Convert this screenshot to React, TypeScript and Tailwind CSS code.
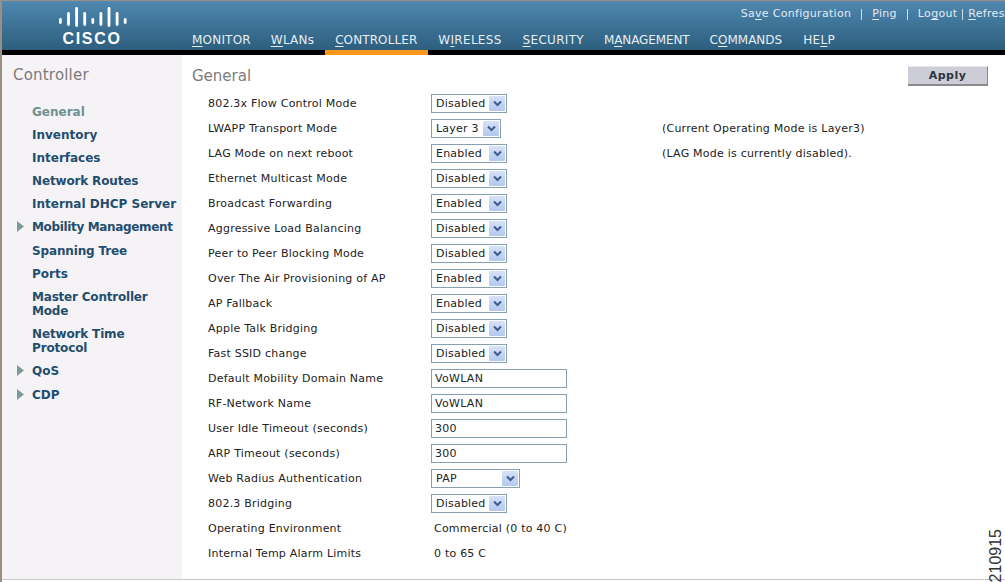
import React from "react";

const font = { fontFamily: '"DejaVu Sans", Verdana, sans-serif' };

function U({ t, i }: { t: string; i: number }) {
  return (
    <span>
      {t.slice(0, i)}
      <u className="underline underline-offset-2">{t[i]}</u>
      {t.slice(i + 1)}
    </span>
  );
}

function Sel({ v, w }: { v: string; w: string }) {
  return (
    <div className={`${w} h-[19px] border border-[#86a0b2] bg-white flex items-center justify-between pl-[4px] pr-[1px] text-[11px] text-[#222]`}>
      <span className="pt-[1px]">{v}</span>
      <span className="w-[16px] h-[15px] bg-gradient-to-b from-[#d6e2f8] to-[#b3c8ee] flex items-center justify-center rounded-[1px]">
        <svg width="9" height="7" viewBox="0 0 9 7">
          <path d="M1 1.5 L4.5 5 L8 1.5" fill="none" stroke="#3f5a8e" strokeWidth="2" />
        </svg>
      </span>
    </div>
  );
}

function Inp({ v }: { v: string }) {
  return (
    <input
      readOnly
      value={v}
      className="w-[136px] h-[19px] border border-[#86a0b2] bg-white px-[3px] text-[11px] text-[#222] tracking-[0.3px] outline-none"
      style={font}
    />
  );
}

const rows: [string, React.ReactNode, string?][] = [
  ["802.3x Flow Control Mode", <Sel v="Disabled" w="w-[76px]" />],
  ["LWAPP Transport Mode", <Sel v="Layer 3" w="w-[70px]" />, "(Current Operating Mode is Layer3)"],
  ["LAG Mode on next reboot", <Sel v="Enabled" w="w-[76px]" />, "(LAG Mode is currently disabled)."],
  ["Ethernet Multicast Mode", <Sel v="Disabled" w="w-[76px]" />],
  ["Broadcast Forwarding", <Sel v="Enabled" w="w-[76px]" />],
  ["Aggressive Load Balancing", <Sel v="Disabled" w="w-[76px]" />],
  ["Peer to Peer Blocking Mode", <Sel v="Disabled" w="w-[76px]" />],
  ["Over The Air Provisioning of AP", <Sel v="Enabled" w="w-[76px]" />],
  ["AP Fallback", <Sel v="Enabled" w="w-[76px]" />],
  ["Apple Talk Bridging", <Sel v="Disabled" w="w-[76px]" />],
  ["Fast SSID change", <Sel v="Disabled" w="w-[76px]" />],
  ["Default Mobility Domain Name", <Inp v="VoWLAN" />],
  ["RF-Network Name", <Inp v="VoWLAN" />],
  ["User Idle Timeout (seconds)", <Inp v="300" />],
  ["ARP Timeout (seconds)", <Inp v="300" />],
  ["Web Radius Authentication", <Sel v="PAP" w="w-[89px]" />],
  ["802.3 Bridging", <Sel v="Disabled" w="w-[76px]" />],
  ["Operating Environment", <span className="pl-[3px] pt-[1px]">Commercial (0 to 40 C)</span>],
  ["Internal Temp Alarm Limits", <span className="pl-[3px] pt-[1px]">0 to 65 C</span>],
];

function Arrow() {
  return (
    <svg width="7" height="11" viewBox="0 0 7 11" className="absolute left-[15px] top-[1px]">
      <path d="M0 0 L7 5.5 L0 11 Z" fill="#7b9c9c" />
    </svg>
  );
}

function Side({ t, arrow, active, cls }: { t: React.ReactNode; arrow?: boolean; active?: boolean; cls: string }) {
  return (
    <div className={`relative pl-[30px] font-bold text-[12px] leading-[14px] whitespace-nowrap ${active ? "text-[#6f9090]" : "text-[#1f4e6f]"} ${cls}`}>
      {arrow && <Arrow />}
      {t}
    </div>
  );
}

const nav: [string, number, string][] = [
  ["MONITOR", 0, "ml-[190px] tracking-[0.2px]"],
  ["WLANs", 0, "ml-[20px] tracking-[0.2px]"],
  ["CONTROLLER", 0, "ml-[21px] tracking-[0.1px]"],
  ["WIRELESS", 1, "ml-[21px] tracking-[0.3px]"],
  ["SECURITY", 0, "ml-[21px] tracking-[0.3px]"],
  ["MANAGEMENT", 1, "ml-[20px] tracking-[-0.1px]"],
  ["COMMANDS", 1, "ml-[20px] tracking-[0px]"],
  ["HELP", 2, "ml-[21px] tracking-[0.3px]"],
];

const bars: [number, number][] = [
  [11, 6],
  [5, 14],
  [0, 20],
  [5, 14],
  [11, 6],
  [5, 14],
  [0, 20],
  [5, 14],
  [11, 6],
];

export default function App() {
  return (
    <div className="relative w-[1005px] h-[582px] overflow-hidden bg-white border-t border-l-2 border-[#9a8f85]" style={font}>
      <header className="relative h-[49px] bg-gradient-to-b from-[#4f88b0] to-[#2d5e7e] overflow-hidden">
        <div className="absolute left-[52px] top-[6px] w-[76px] flex flex-col items-center">
          <svg width="70" height="21" viewBox="0 0 70 21" className="ml-[2px]">
            {bars.map(([y, h], i) => (
              <rect key={i} x={1 + i * 8.1} y={y} width="2.8" height={h} rx="1.4" fill="#ffffff" />
            ))}
          </svg>
          <span className="text-[16px] leading-[16px] font-bold text-white tracking-[1.7px] mt-[3px]" style={{ fontFamily: '"Liberation Sans", sans-serif' }}>
            CISCO
          </span>
        </div>
        <div className="absolute right-[-7px] top-[6px] flex items-center text-[11px] leading-[14px] text-[#e2ebf1] whitespace-nowrap tracking-[0.3px]">
          <U t="Save Configuration" i={2} />
          <span className="w-px h-[11px] bg-[#cfdde7] mx-[10px]" />
          <U t="Ping" i={0} />
          <span className="w-px h-[11px] bg-[#cfdde7] mx-[10px]" />
          <U t="Logout" i={2} />
          <span className="w-px h-[11px] bg-[#cfdde7] mx-[5px]" />
          <U t="Refresh" i={0} />
        </div>
        <nav className="absolute left-0 bottom-[2px] flex text-[12px] leading-[16px] text-[#e6eef3] whitespace-nowrap">
          {nav.map(([t, i, c]) => (
            <span key={t} className={c}>
              <U t={t} i={i} />
            </span>
          ))}
        </nav>
      </header>
      <div className="h-[5px] bg-black pl-[323px]">
        <div className="w-[103px] h-full bg-[#f7981d]" />
      </div>
      <div className="flex h-[525px] border-b border-[#c8c8c8]">
        <aside className="w-[180px] shrink-0 bg-[#f6f3f6] pt-[11px]">
          <div className="pl-[11px] text-[15px] leading-[18px] text-[#7c7c7c] font-normal tracking-[0.2px]">Controller</div>
          <Side t="General" active cls="mt-[21px]" />
          <Side t="Inventory" cls="mt-[9px]" />
          <Side t="Interfaces" cls="mt-[9px]" />
          <Side t="Network Routes" cls="mt-[9px] tracking-[-0.15px]" />
          <Side t="Internal DHCP Server" cls="mt-[9px]" />
          <Side t="Mobility Management" arrow cls="mt-[9px] tracking-[-0.35px]" />
          <Side t="Spanning Tree" cls="mt-[10px] tracking-[-0.15px]" />
          <Side t="Ports" cls="mt-[9px]" />
          <Side t={<>Master Controller<br />Mode</>} cls="mt-[9px] tracking-[-0.2px]" />
          <Side t={<>Network Time<br />Protocol</>} cls="mt-[9px] tracking-[-0.15px]" />
          <Side t="QoS" arrow cls="mt-[9px]" />
          <Side t="CDP" arrow cls="mt-[10px]" />
        </aside>
        <main className="flex-1 min-w-0 pl-[10px] pt-[11px]">
          <div className="flex items-start justify-between pr-[15px] h-[24px]">
            <div className="text-[15px] leading-[18px] text-[#7c7c7c] pt-[1px]">General</div>
            <div className="w-[80px] h-[20px] mr-[2px] pt-[2px] bg-[#cdcdd8] border-r border-b-2 border-[#8a8a8a] border-t border-t-[#e8e8ee] flex items-center justify-center text-[11px] font-bold text-[#2b3340] tracking-[0.5px]">
              Apply
            </div>
          </div>
          <div className="text-[11px] text-[#222] mt-[1px] tracking-[0.22px]">
            {rows.map(([l, c, n]) => (
              <div key={l} className="flex items-center h-[25px]">
                <div className="w-[239px] pl-[16px] pt-[1px] shrink-0">{l}</div>
                <div className="w-[231px] shrink-0 flex">{c}</div>
                {n && <div className="pt-[1px]">{n}</div>}
              </div>
            ))}
          </div>
        </main>
      </div>
      <div className="absolute left-[985px] top-[528px] text-[16px] leading-[18px] text-[#333] [writing-mode:vertical-rl] rotate-180" style={{ fontFamily: '"Liberation Sans", sans-serif' }}>
        210915
      </div>
    </div>
  );
}
